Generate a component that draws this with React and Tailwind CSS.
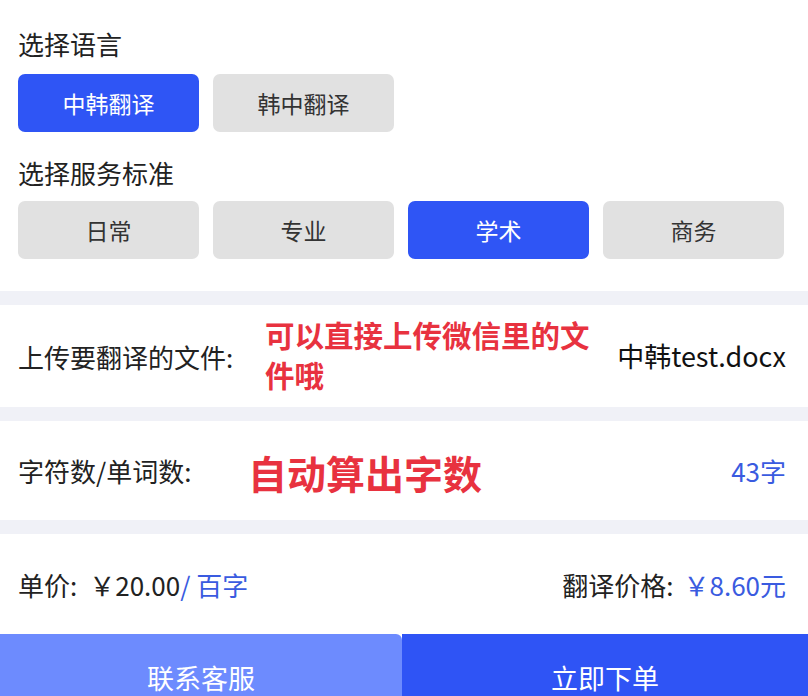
import React, { useState } from 'react';

const font = { fontFamily: '"Noto Sans CJK SC", "Noto Sans", sans-serif' };

const Option = ({ label, active, onClick }) => (
  <button
    onClick={onClick}
    className={`h-[58px] rounded-[7px] text-[23px] ${
      active ? 'bg-[#2f55f5] text-white' : 'bg-[#e1e1e1] text-[#333]'
    }`}
  >
    {label}
  </button>
);

const Gap = () => <div className="h-[14px] shrink-0 bg-[#f0f1f7]" />;

export default function App() {
  const [lang, setLang] = useState('中韩翻译');
  const [level, setLevel] = useState('学术');

  return (
    <div className="w-[808px] h-[696px] overflow-hidden bg-white flex flex-col" style={font}>
      <section className="shrink-0 pl-[18px] pr-[24px] pt-[27px] pb-[32px]">
        <h2 className="text-[26px] leading-[34px] text-[#222] mb-[13px]">选择语言</h2>
        <div className="grid grid-cols-4 gap-[14px]">
          {['中韩翻译', '韩中翻译'].map((l) => (
            <Option key={l} label={l} active={lang === l} onClick={() => setLang(l)} />
          ))}
        </div>
        <h2 className="text-[26px] leading-[34px] text-[#222] mt-[24px] mb-[11px]">选择服务标准</h2>
        <div className="grid grid-cols-4 gap-[14px]">
          {['日常', '专业', '学术', '商务'].map((l) => (
            <Option key={l} label={l} active={level === l} onClick={() => setLevel(l)} />
          ))}
        </div>
      </section>

      <Gap />

      <section className="shrink-0 h-[102px] pl-[18px] pr-[22px] flex items-center">
        <span className="text-[26px] text-[#222] w-[247px] shrink-0">上传要翻译的文件:</span>
        <span className="text-[29.5px] leading-[40px] font-bold text-[#e8323f] w-[336px] mt-[-4px]">
          可以直接上传微信里的文件哦
        </span>
        <span className="ml-auto text-[27px] text-[#111]">中韩test.docx</span>
      </section>

      <Gap />

      <section className="shrink-0 h-[99px] pl-[18px] pr-[22px] flex items-center">
        <span className="text-[26px] text-[#222] w-[230px] shrink-0">字符数/单词数:</span>
        <span className="text-[39px] font-bold text-[#e8323f] mt-[4px]">自动算出字数</span>
        <span className="ml-auto text-[26px] text-[#3a5be0]">43字</span>
      </section>

      <Gap />

      <section className="shrink-0 h-[100px] pl-[18px] pr-[22px] flex items-center text-[26px]">
        <span className="text-[#222]">单价:</span>
        <span className="ml-[12px] text-[#222]">￥20.00</span>
        <span className="text-[#3a5be0]">/ 百字</span>
        <span className="ml-auto text-[#222]">翻译价格:</span>
        <span className="ml-[10px] text-[#3a5be0]">￥8.60元</span>
      </section>

      <div className="shrink-0 flex h-[90px]">
        <button className="w-[402px] bg-[#6d8bfe] rounded-tr-[6px] text-white text-[27px] pb-[2px]">
          联系客服
        </button>
        <button className="flex-1 bg-[#2f54f5] text-white text-[27px] pb-[2px]">立即下单</button>
      </div>
    </div>
  );
}
